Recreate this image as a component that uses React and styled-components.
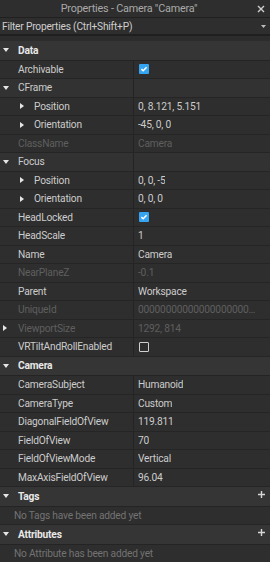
import styled, { createGlobalStyle } from "styled-components";

const GlobalStyle = createGlobalStyle`
  html, body {
    margin: 0;
    padding: 0;
    background: #2e2e2e;
  }
  * {
    box-sizing: border-box;
  }
`;

const sections = [
  {
    title: "Data",
    rows: [
      { name: "Archivable", check: true },
      { name: "CFrame", group: true },
      { name: "Position", child: true, value: "0, 8.121, 5.151" },
      { name: "Orientation", child: true, value: "-45, 0, 0" },
      { name: "ClassName", value: "Camera", disabled: true },
      { name: "Focus", group: true },
      { name: "Position", child: true, value: "0, 0, -5" },
      { name: "Orientation", child: true, value: "0, 0, 0" },
      { name: "HeadLocked", check: true },
      { name: "HeadScale", value: "1" },
      { name: "Name", value: "Camera" },
      { name: "NearPlaneZ", value: "-0.1", disabled: true },
      { name: "Parent", value: "Workspace" },
      {
        name: "UniqueId",
        value: "000000000000000000000000000000000",
        disabled: true,
      },
      { name: "ViewportSize", value: "1292, 814", disabled: true, collapsed: true },
      { name: "VRTiltAndRollEnabled", check: false },
    ],
  },
  {
    title: "Camera",
    rows: [
      { name: "CameraSubject", value: "Humanoid" },
      { name: "CameraType", value: "Custom" },
      { name: "DiagonalFieldOfView", value: "119.811" },
      { name: "FieldOfView", value: "70" },
      { name: "FieldOfViewMode", value: "Vertical" },
      { name: "MaxAxisFieldOfView", value: "96.04" },
    ],
  },
  { title: "Tags", plus: true, empty: "No Tags have been added yet" },
  { title: "Attributes", plus: true, empty: "No Attribute has been added yet" },
];

const DownArrow = () => (
  <svg width="6" height="4" viewBox="0 0 6 4">
    <path d="M0 0 H6 L3 4 Z" fill="#e6e6e6" />
  </svg>
);

const RightArrow = () => (
  <svg width="4" height="6" viewBox="0 0 4 6">
    <path d="M0 0 L4 3 L0 6 Z" fill="#e6e6e6" />
  </svg>
);

const Check = ({ on }) => (
  <CheckBox $on={on}>
    {on && (
      <svg width="8" height="8" viewBox="0 0 8 8">
        <path
          d="M1.4 4.1 L3.2 5.8 L6.6 2.2"
          stroke="#fff"
          strokeWidth="1.5"
          fill="none"
        />
      </svg>
    )}
  </CheckBox>
);

export default function App() {
  return (
    <>
      <GlobalStyle />
      <Panel>
        <TitleBar>
          <span>Properties - Camera "Camera"</span>
          <CloseBtn>
            <svg width="8" height="8" viewBox="0 0 8 8">
              <path d="M1 1 L7 7 M7 1 L1 7" stroke="#cfcfcf" strokeWidth="1.4" />
            </svg>
          </CloseBtn>
        </TitleBar>
        <FilterBar>
          <span>Filter Properties (Ctrl+Shift+P)</span>
          <svg width="5" height="3" viewBox="0 0 5 3">
            <path d="M0 0 H5 L2.5 3 Z" fill="#bdbdbd" />
          </svg>
        </FilterBar>
        <Gap />
        {sections.map((s) => (
          <div key={s.title}>
            <SectionHeader>
              <Toggle>
                <DownArrow />
              </Toggle>
              <HeaderTitle>{s.title}</HeaderTitle>
              {s.plus && (
                <PlusBtn>
                  <svg width="7" height="7" viewBox="0 0 7 7">
                    <path d="M3.5 0 V7 M0 3.5 H7" stroke="#d6d6d6" strokeWidth="1.4" />
                  </svg>
                </PlusBtn>
              )}
            </SectionHeader>
            {s.empty && <EmptyRow>{s.empty}</EmptyRow>}
            {s.rows &&
              s.rows.map((r, i) => (
                <Row key={i} $group={r.group}>
                  <NameCell $child={r.child} $disabled={r.disabled}>
                    {r.group && (
                      <RowToggle>
                        <DownArrow />
                      </RowToggle>
                    )}
                    {r.collapsed && (
                      <RowToggle>
                        <RightArrow />
                      </RowToggle>
                    )}
                    {r.child && (
                      <ChildToggle>
                        <RightArrow />
                      </ChildToggle>
                    )}
                    {r.name}
                  </NameCell>
                  <ValueCell $disabled={r.disabled}>
                    {r.check !== undefined ? (
                      <Check on={r.check} />
                    ) : (
                      <ValueText>{r.value}</ValueText>
                    )}
                  </ValueCell>
                </Row>
              ))}
          </div>
        ))}
      </Panel>
    </>
  );
}

const Panel = styled.div`
  width: 270px;
  height: 562px;
  overflow: hidden;
  background: #2e2e2e;
  font-family: Roboto, "Liberation Sans", sans-serif;
  font-size: 10.2px;
  letter-spacing: -0.2px;
  color: #cccccc;
`;

const TitleBar = styled.div`
  position: relative;
  height: 18px;
  display: flex;
  align-items: center;
  justify-content: center;
  padding-right: 12px;
  background: #2e2e2e;
  border-bottom: 1px solid #202020;
  color: #a9a9a9;
  font-size: 10.8px;
`;

const CloseBtn = styled.div`
  position: absolute;
  right: 5px;
  top: 5px;
  display: flex;
`;

const FilterBar = styled.div`
  height: 18px;
  display: flex;
  align-items: center;
  justify-content: space-between;
  padding: 0 4px 0 2px;
  background: #2e2e2e;
  border-bottom: 2px solid #1f1f1f;
  color: #cfcfcf;
`;

const Gap = styled.div`
  height: 5px;
  background: #2c2c2c;
`;

const SectionHeader = styled.div`
  height: 19.5px;
  display: flex;
  align-items: center;
  background: #353535;
  border-bottom: 1px solid #242424;
  color: #e8e8e8;
  font-weight: 700;
`;

const Toggle = styled.div`
  width: 18px;
  padding-left: 3px;
  display: flex;
  align-items: center;
`;

const HeaderTitle = styled.span`
  flex: 1;
`;

const PlusBtn = styled.span`
  width: 12px;
  display: flex;
  align-self: flex-start;
  padding-top: 4px;
`;

const Row = styled.div`
  height: 18.5px;
  display: grid;
  grid-template-columns: 133px 1px minmax(0, 1fr);
  border-bottom: 1px solid #252525;
  background: ${(p) => (p.$group ? "#323232" : "#2e2e2e")};

  &::before {
    content: "";
    grid-column: 2;
    grid-row: 1;
    background: #242424;
  }
`;

const NameCell = styled.div`
  grid-column: 1;
  grid-row: 1;
  position: relative;
  display: flex;
  align-items: center;
  padding-left: ${(p) => (p.$child ? "34px" : "18px")};
  color: ${(p) => (p.$disabled ? "#5f5f5f" : "#cccccc")};
  white-space: nowrap;
`;

const RowToggle = styled.span`
  position: absolute;
  left: 3px;
  top: 50%;
  transform: translateY(-50%);
  display: flex;
`;

const ChildToggle = styled.span`
  position: absolute;
  left: 20px;
  top: 50%;
  transform: translateY(-50%);
  display: flex;
`;

const ValueCell = styled.div`
  grid-column: 3;
  grid-row: 1;
  display: flex;
  align-items: center;
  padding-left: 4px;
  padding-right: 10px;
  min-width: 0;
  overflow: hidden;
  white-space: nowrap;
  color: ${(p) => (p.$disabled ? "#5f5f5f" : "#cccccc")};
`;

const ValueText = styled.span`
  display: block;
  flex: 0 1 auto;
  min-width: 0;
  overflow: hidden;
  white-space: nowrap;
  text-overflow: ellipsis;
`;

const CheckBox = styled.span`
  width: 10px;
  height: 10px;
  margin-left: 1px;
  display: flex;
  align-items: center;
  justify-content: center;
  background: ${(p) => (p.$on ? "#35a5f2" : "transparent")};
  border: ${(p) => (p.$on ? "none" : "1px solid #cfcfcf")};
  border-radius: 1px;
`;

const EmptyRow = styled.div`
  height: 18.5px;
  display: flex;
  align-items: center;
  padding-left: 14px;
  border-bottom: 1px solid #252525;
  color: #737373;
`;
